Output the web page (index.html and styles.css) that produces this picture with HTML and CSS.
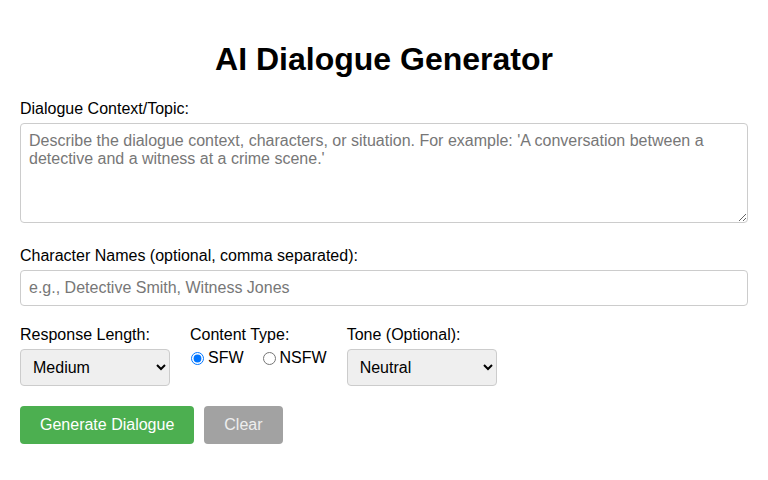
FILE: index.html
```html
<!DOCTYPE html>
<html>
<head>
<meta charset="utf-8">
<link rel="stylesheet" href="styles.css">
</head>
<body>
<div class="container">
  <h1>AI Dialogue Generator</h1>
  <div class="form-group">
    <label class="field-label" for="context">Dialogue Context/Topic:</label>
    <textarea id="context" placeholder="Describe the dialogue context, characters, or situation. For example: 'A conversation between a detective and a witness at a crime scene.'"></textarea>
  </div>
  <div class="form-group">
    <label class="field-label" for="names">Character Names (optional, comma separated):</label>
    <input type="text" id="names" placeholder="e.g., Detective Smith, Witness Jones">
  </div>
  <div class="options-row">
    <div class="option">
      <label class="field-label" for="length">Response Length:</label>
      <select id="length">
        <option>Short</option>
        <option selected>Medium</option>
        <option>Long</option>
      </select>
    </div>
    <div class="option">
      <span class="field-label">Content Type:</span>
      <div class="radio-group">
        <label class="radio"><input type="radio" name="ct" checked> SFW</label>
        <label class="radio"><input type="radio" name="ct"> NSFW</label>
      </div>
    </div>
    <div class="option">
      <label class="field-label" for="tone">Tone (Optional):</label>
      <select id="tone">
        <option selected>Neutral</option>
        <option>Friendly</option>
        <option>Tense</option>
      </select>
    </div>
  </div>
  <div class="buttons">
    <button class="btn btn-primary">Generate Dialogue</button>
    <button class="btn btn-secondary">Clear</button>
  </div>
</div>
</body>
</html>
```
FILE: styles.css
```css
html, body {
  margin: 0;
  padding: 0;
  background: #ffffff;
}
body {
  font-family: "Liberation Sans", Arial, sans-serif;
  font-size: 16px;
  color: #000;
}
.container {
  padding: 21px 20px 20px;
}
h1 {
  text-align: center;
  font-size: 32px;
  font-weight: bold;
  margin: 20px 0 22px;
}
.form-group {
  margin-bottom: 20px;
}
.field-label {
  display: block;
  margin-bottom: 5px;
}
textarea, input[type="text"] {
  width: 100%;
  box-sizing: border-box;
  padding: 8px;
  border: 1px solid #ccc;
  border-radius: 4px;
  font-family: "Liberation Sans", Arial, sans-serif;
  font-size: 16px;
  color: #000;
}
textarea {
  height: 100px;
  resize: vertical;
}
::placeholder {
  color: #777;
}
.options-row {
  display: flex;
  gap: 20px;
  margin-bottom: 20px;
}
select {
  width: 150px;
  padding: 8px;
  border: 1px solid #ccc;
  border-radius: 4px;
  font-family: "Liberation Sans", Arial, sans-serif;
  font-size: 16px;
  background: #efefef;
  color: #000;
}
.radio-group {
  display: flex;
  gap: 18px;
  margin-top: 0;
}
.radio {
  display: flex;
  align-items: center;
  gap: 4px;
}
.radio input {
  margin: 0 0 0 1px;
}
.buttons {
  display: flex;
  gap: 10px;
}
.btn {
  border: none;
  border-radius: 4px;
  padding: 10px 20px;
  font-family: "Liberation Sans", Arial, sans-serif;
  font-size: 16px;
  color: #fff;
  cursor: pointer;
}
.btn-primary {
  background: #4caf50;
}
.btn-secondary {
  background: #a2a2a2;
  color: #eeeeee;
}
```
